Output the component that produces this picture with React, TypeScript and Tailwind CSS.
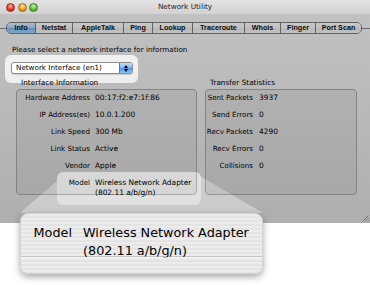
import React from "react";

const tabs = [
  { label: "Info", cls: "w-[28px]", active: true },
  { label: "Netstat", cls: "w-[37px] border-l border-[#7c7c7c]" },
  { label: "AppleTalk", cls: "w-[51px] border-l border-[#7c7c7c]" },
  { label: "Ping", cls: "w-[29px] border-l border-[#7c7c7c]" },
  { label: "Lookup", cls: "w-[40px] border-l border-[#7c7c7c]" },
  { label: "Traceroute", cls: "w-[52px] border-l border-[#7c7c7c]" },
  { label: "Whois", cls: "w-[36px] border-l border-[#7c7c7c]" },
  { label: "Finger", cls: "w-[35px] border-l border-[#7c7c7c]" },
  { label: "Port Scan", cls: "w-[46px] border-l border-[#7c7c7c]" },
];

const leftRows: [string, string][] = [
  ["Hardware Address", "00:17:f2:e7:1f:86"],
  ["IP Address(es)", "10.0.1.200"],
  ["Link Speed", "300 Mb"],
  ["Link Status", "Active"],
  ["Vendor", "Apple"],
];

const rightRows: [string, string][] = [
  ["Sent Packets", "3937"],
  ["Send Errors", "0"],
  ["Recv Packets", "4290"],
  ["Recv Errors", "0"],
  ["Collisions", "0"],
];

function Label({ children }: { children: React.ReactNode }) {
  return (
    <div className="flex justify-end whitespace-nowrap text-[7.1px] leading-[10px] text-black">
      {children}
    </div>
  );
}

function Value({ children }: { children: React.ReactNode }) {
  return <div className="whitespace-nowrap text-[7.45px] leading-[10px] text-black">{children}</div>;
}

export default function App() {
  return (
    <div className="relative w-[370px] h-[285px] overflow-hidden bg-white font-['DejaVu_Sans',sans-serif] text-black">
      {/* window */}
      <div className="relative h-[223px] flex flex-col bg-[linear-gradient(#f7f7f7,#dedede)]">
        {/* title bar */}
        <div className="h-[14px] shrink-0 grid grid-cols-[1fr_auto_1fr] items-center bg-[linear-gradient(#e2e2e2,#d2d2d2)]">
          <div className="flex items-center gap-[2.5px] pl-[6px]">
            <div className="w-[9px] h-[9px] rounded-full border border-[#9b2a22] bg-[radial-gradient(circle_at_50%_30%,#ffb3a8,#e2392c_55%,#a5160d)]" />
            <div className="w-[9px] h-[9px] rounded-full border border-[#a66a12] bg-[radial-gradient(circle_at_50%_30%,#ffe2a0,#f2a024_55%,#b4650a)]" />
            <div className="w-[9px] h-[9px] rounded-full border border-[#3f7d25] bg-[radial-gradient(circle_at_50%_30%,#cff5b0,#5fbf38_55%,#2f7d15)]" />
          </div>
          <div className="text-[7.3px] leading-[10px] text-[#222]">Network Utility</div>
          <div />
        </div>

        {/* tabs */}
        <div className="mt-[8px] h-[12px] flex items-center shrink-0">
          <div className="w-[6px] h-px bg-[#8a8a8a]" />
          <div className="flex h-[12px] rounded-[5px] border border-[#7c7c7c] overflow-hidden">
            {tabs.map((t) => (
              <div
                key={t.label}
                className={`${t.cls} h-full flex items-center justify-center whitespace-nowrap font-bold font-['Liberation_Sans',Arial,sans-serif] text-[7.2px] leading-[10px] text-[#111] ${
                  t.active
                    ? "bg-[linear-gradient(#e2f0ff,#a9d1fb_50%,#7cb6f3_51%,#a8d4fb)]"
                    : "bg-[linear-gradient(#ffffff,#f4f4f4_50%,#e9e9e9_51%,#f7f7f7)]"
                }`}
              >
                {t.label}
              </div>
            ))}
          </div>
          <div className="flex-1 h-px bg-[#8a8a8a]" />
        </div>

        {/* prompt */}
        <div className="pl-[12px] mt-[11px] text-[7.2px] leading-[10px] whitespace-nowrap">
          Please select a network interface for information
        </div>

        {/* popup */}
        <div className="ml-[11px] mt-[7px] w-[122px] h-[12px] flex rounded-[3px] border border-[#8d8d8d] bg-white shadow-[0_1px_1px_rgba(0,0,0,0.15)] overflow-hidden">
          <div className="flex-1 pl-[4px] flex items-center text-[7.2px] leading-[10px] whitespace-nowrap">
            Network Interface (en1)
          </div>
          <div className="w-[13px] h-full border-l border-[#4a7fc4] bg-[linear-gradient(#c4defa,#7eb4f2_50%,#4d92e8_51%,#8ec2f7)] flex flex-col items-center justify-center gap-[1px]">
            <div className="w-0 h-0 border-x-[2px] border-x-transparent border-b-[3px] border-b-black" />
            <div className="w-0 h-0 border-x-[2px] border-x-transparent border-t-[3px] border-t-black" />
          </div>
        </div>

        {/* group boxes */}
        <div className="mt-[4px] ml-[16px] flex gap-[8px]">
          <div className="w-[181px] flex flex-col">
            <div className="pl-[5px] h-[10px] text-[7.3px] leading-[10px] whitespace-nowrap">Interface Information</div>
            <div className="mt-[1px] h-[106px] rounded-[4px] border border-[#a8a8a8] bg-black/[0.05] pt-[3px] grid grid-cols-[73px_1fr] gap-x-[5px] gap-y-[7px] content-start">
              {leftRows.map(([l, v]) => (
                <React.Fragment key={l}>
                  <Label>{l}</Label>
                  <Value>{v}</Value>
                </React.Fragment>
              ))}
              <Label>Model</Label>
              <div>
                <Value>Wireless Network Adapter</Value>
                <Value>(802.11 a/b/g/n)</Value>
              </div>
            </div>
          </div>
          <div className="w-[152px] flex flex-col">
            <div className="pl-[5px] h-[10px] text-[7.3px] leading-[10px] whitespace-nowrap">Transfer Statistics</div>
            <div className="mt-[1px] h-[106px] rounded-[4px] border border-[#a8a8a8] bg-black/[0.05] pt-[3px] grid grid-cols-[47px_1fr] gap-x-[6px] gap-y-[7px] content-start">
              {rightRows.map(([l, v]) => (
                <React.Fragment key={l}>
                  <Label>{l}</Label>
                  <Value>{v}</Value>
                </React.Fragment>
              ))}
            </div>
          </div>
        </div>

        {/* resize grip */}
        <svg className="absolute right-[1px] bottom-[1px]" width="8" height="8" viewBox="0 0 8 8">
          <path d="M7.5 1.5 L1.5 7.5 M7.5 4 L4 7.5 M7.5 6.5 L6.5 7.5" stroke="#7a7a7a" strokeWidth="0.8" />
          <path d="M8 2.3 L2.3 8 M8 4.8 L4.8 8" stroke="#f2f2f2" strokeWidth="0.6" />
        </svg>

        {/* dimming overlay with spotlights */}
        <svg
          className="absolute left-0 top-[14px] pointer-events-none"
          width="370"
          height="209"
          viewBox="0 0 370 209"
        >
          <defs>
            <mask id="spotmask" maskUnits="userSpaceOnUse" x="0" y="0" width="370" height="209">
              <rect width="370" height="209" fill="white" />
              <polygon points="58,166 200,162 263,199 20,199" fill="#6e6e6e" />
              <rect x="5" y="41" width="133" height="28" rx="6" fill="black" />
              <rect x="57" y="158" width="144" height="33" rx="6" fill="black" />
            </mask>
          </defs>
          <rect width="370" height="209" fill="black" fillOpacity="0.21" mask="url(#spotmask)" />
        </svg>
      </div>

      {/* magnified callout */}
      <div className="absolute left-[20px] top-[213px] w-[243px] h-[61px] rounded-[8px] overflow-hidden flex flex-col border border-[#d2d2d2] shadow-[0_3px_7px_rgba(0,0,0,0.35)] bg-[repeating-linear-gradient(180deg,#ececec_0px,#ececec_2px,#e4e4e4_2px,#e4e4e4_4px)]">
        <div className="h-[43px] shrink-0 border-b border-[#c4c4c4] pt-[10px] flex gap-[11px] text-[12.8px] leading-[18px] text-black">
          <div className="w-[51px] flex justify-end whitespace-nowrap">Model</div>
          <div className="whitespace-nowrap">
            <div>Wireless Network Adapter</div>
            <div>(802.11 a/b/g/n)</div>
          </div>
        </div>
        <div className="flex-1 border-t border-white/70" />
      </div>
    </div>
  );
}
